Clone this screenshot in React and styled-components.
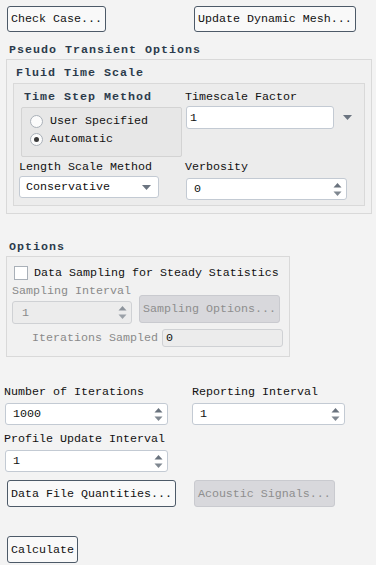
import React from "react";
import styled, { createGlobalStyle } from "styled-components";

const GlobalStyle = createGlobalStyle`
  html, body { margin: 0; padding: 0; background: #f3f3f3; }
  body {
    font-family: "Liberation Mono", "DejaVu Sans Mono", monospace;
    font-size: 11.67px;
    color: #111;
  }
  * { box-sizing: border-box; }
`;

const Page = styled.div`
  width: 376px;
  height: 565px;
  overflow: hidden;
  display: flex;
  flex-direction: column;
  align-items: flex-start;
`;

const Row = styled.div`
  display: flex;
  align-items: ${(p) => p.$align || "center"};
  gap: ${(p) => p.$gap || 0}px;
  margin: ${(p) => p.$m || "0"};
`;

const Button = styled.button`
  font: inherit;
  height: ${(p) => p.$h || 27}px;
  padding: 0 3px;
  border-radius: 3px;
  border: 1px solid ${(p) => (p.disabled ? "#c9cacf" : "#4d5a68")};
  background: ${(p) => (p.disabled ? "#d8d8dc" : "#f9f9f9")};
  color: ${(p) => (p.disabled ? "#8e8e8e" : "#111")};
  white-space: pre;
  line-height: 14px;
  cursor: default;
  margin: ${(p) => p.$m || "0"};
`;

const Label = styled.div`
  line-height: 14px;
  height: 14px;
  white-space: pre;
  color: ${(p) => (p.$muted ? "#8a8a8a" : "#111")};
  margin: ${(p) => p.$m || "0"};
`;

const Heading = styled.div`
  line-height: 14px;
  height: 14px;
  white-space: pre;
  font-weight: bold;
  letter-spacing: 1px;
  color: #2c3b4c;
  margin: ${(p) => p.$m || "0"};
`;

const GroupBox = styled.div`
  border: 1px solid #d9d9d9;
  background: ${(p) => p.$bg || "#f1f1f1"};
  width: ${(p) => p.$w}px;
  height: ${(p) => p.$h}px;
  margin: ${(p) => p.$m || "0"};
  padding: ${(p) => p.$p || "0"};
  display: flex;
  flex-direction: column;
  align-items: flex-start;
`;

const InnerGrid = styled.div`
  display: grid;
  grid-template-columns: 166px 1fr;
  row-gap: 3px;
  width: 100%;
`;

const Col = styled.div`
  display: flex;
  flex-direction: column;
  align-items: flex-start;
`;

const RadioBox = styled.div`
  width: 161px;
  height: 50px;
  margin: 3px 0 0 2px;
  border: 1px solid #d3d3d3;
  border-radius: 2px;
  background: #e7e7e7;
  padding: 4px 0 0 8px;
  display: flex;
  flex-direction: column;
`;

const RadioRow = styled.div`
  display: flex;
  align-items: center;
  height: 18px;
  gap: 7px;
`;

const RadioCircle = styled.span`
  width: 13px;
  height: 13px;
  border-radius: 50%;
  border: 1px solid #a9b0b8;
  background: #fbfbfb;
  display: inline-flex;
  align-items: center;
  justify-content: center;
  &::after {
    content: "";
    width: 5px;
    height: 5px;
    border-radius: 50%;
    background: ${(p) => (p.$on ? "#3a3a3a" : "transparent")};
  }
`;

const Field = styled.div`
  width: ${(p) => p.$w}px;
  height: ${(p) => p.$h || 22}px;
  margin: ${(p) => p.$m || "0"};
  border: 1px solid ${(p) => (p.$disabled ? "#cfd1d4" : "#c3cad3")};
  border-radius: 3px;
  background: ${(p) => (p.$disabled ? "#ececec" : "#fff")};
  color: ${(p) => (p.$disabled ? "#8a8a8a" : "#111")};
  padding: 0 ${(p) => p.$pr ?? 4}px 0 ${(p) => p.$pl ?? 7}px;
  display: flex;
  align-items: center;
  justify-content: space-between;
  line-height: 14px;
`;

const Checkbox = styled.span`
  width: 14px;
  height: 14px;
  border: 1px solid #a9b0b8;
  background: #fff;
  display: inline-block;
`;

const ArrowDown = ({ color = "#6b7480" }) => (
  <svg width="9" height="5" viewBox="0 0 9 5">
    <path d="M0 0 H9 L4.5 5 Z" fill={color} />
  </svg>
);

const SpinArrows = ({ color = "#69727d" }) => (
  <svg width="9" height="15" viewBox="0 0 9 15">
    <path d="M0.5 5.5 L4.5 1 L8.5 5.5 Z" fill={color} />
    <path d="M0.5 9.5 H8.5 L4.5 14 Z" fill={color} opacity="0.85" />
  </svg>
);

const Spinner = ({ value, w, h, m, disabled, pl }) => (
  <Field $w={w} $h={h} $m={m} $disabled={disabled} $pl={pl}>
    <span>{value}</span>
    <SpinArrows color={disabled ? "#8d949c" : "#69727d"} />
  </Field>
);

const IterGrid = styled.div`
  display: grid;
  grid-template-columns: 188px 1fr;
  margin: 28px 0 0 4px;
`;

export default function App() {
  return (
    <>
      <GlobalStyle />
      <Page>
        <Row $m="6px 0 0 7px" $gap={88}>
          <Button $h={26}>Check Case...</Button>
          <Button $h={26}>Update Dynamic Mesh...</Button>
        </Row>

        <Heading $m="11px 0 0 9px">Pseudo Transient Options</Heading>
        <GroupBox $w={366} $h={155} $m="2px 0 0 6px" $p="6px 6px 0 6px" $bg="#f1f1f1">
          <Heading $m="0 0 0 3px">Fluid Time Scale</Heading>
          <GroupBox $w={352} $h={123} $m="3px 0 0 0" $p="6px 0 0 5px" $bg="#ececec">
            <InnerGrid>
              <Col>
                <Heading $m="0 0 0 5px">Time Step Method</Heading>
                <RadioBox>
                  <RadioRow>
                    <RadioCircle />
                    <Label>User Specified</Label>
                  </RadioRow>
                  <RadioRow>
                    <RadioCircle $on />
                    <Label>Automatic</Label>
                  </RadioRow>
                </RadioBox>
              </Col>
              <Col>
                <Label>Timescale Factor</Label>
                <Row $m="2px 0 0 1px" $gap={9}>
                  <Field $w={148} $h={23} $pl={3}>
                    <span>1</span>
                  </Field>
                  <ArrowDown />
                </Row>
              </Col>
              <Col>
                <Label>Length Scale Method</Label>
                <Field $w={140} $h={22} $m="2px 0 0 0" $pl={6} $pr={7}>
                  <span>Conservative</span>
                  <ArrowDown />
                </Field>
              </Col>
              <Col>
                <Label>Verbosity</Label>
                <Spinner value="0" w={161} h={22} m="4px 0 0 1px" />
              </Col>
            </InnerGrid>
          </GroupBox>
        </GroupBox>

        <Heading $m="26px 0 0 9px">Options</Heading>
        <GroupBox $w={284} $h={101} $m="2px 0 0 6px" $p="9px 0 0 5px" $bg="#f1f1f1">
          <Row $gap={6} $m="0 0 0 2px">
            <Checkbox />
            <Label>Data Sampling for Steady Statistics</Label>
          </Row>
          <Row $align="flex-end" $gap={7} $m="4px 0 0 0">
            <Col>
              <Label $muted>Sampling Interval</Label>
              <Spinner value="1" w={120} h={23} m="3px 0 0 0" disabled pl={9} />
            </Col>
            <Button disabled $h={28} $m="0 0 1px 0">Sampling Options...</Button>
          </Row>
          <Row $gap={4} $m="5px 0 0 20px">
            <Label $muted>Iterations Sampled</Label>
            <Field $w={121} $h={18} $pl={3} $disabled style={{ color: "#111" }}>
              <span>0</span>
            </Field>
          </Row>
        </GroupBox>

        <IterGrid>
          <Col>
            <Label>Number of Iterations</Label>
            <Spinner value="1000" w={163} h={22} m="4px 0 0 1px" />
          </Col>
          <Col>
            <Label>Reporting Interval</Label>
            <Spinner value="1" w={153} h={22} m="4px 0 0 0" />
          </Col>
          <Col style={{ marginTop: 7 }}>
            <Label>Profile Update Interval</Label>
            <Spinner value="1" w={163} h={22} m="4px 0 0 1px" />
          </Col>
        </IterGrid>

        <Row $m="8px 0 0 7px" $gap={18}>
          <Button>Data File Quantities...</Button>
          <Button disabled>Acoustic Signals...</Button>
        </Row>

        <Button $m="29px 0 0 7px">Calculate</Button>
      </Page>
    </>
  );
}
